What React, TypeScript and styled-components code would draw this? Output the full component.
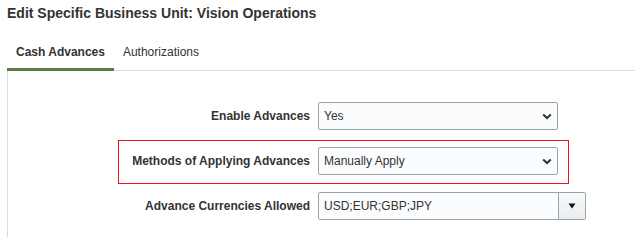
import React from "react";
import styled, { createGlobalStyle } from "styled-components";

const Global = createGlobalStyle`
  html, body { margin: 0; padding: 0; background: #ffffff; }
  body { font-family: "Liberation Sans", Arial, sans-serif; color: #333333; }
`;

const Page = styled.div`
  width: 635px;
  height: 237px;
  overflow: hidden;
  background: #ffffff;
`;

const Title = styled.h1`
  margin: 0;
  padding: 5px 0 0 7px;
  font-size: 14px;
  line-height: 17px;
  font-weight: 700;
  color: #333333;
`;

const TabBar = styled.div`
  display: flex;
  margin: 22px 0 0 7px;
  border-bottom: 1px solid #d6dde3;
`;

const Tab = styled.div<{ $active?: boolean }>`
  padding: 0 9px;
  height: 24px;
  line-height: 16px;
  font-size: 12px;
  font-weight: ${(p) => (p.$active ? 700 : 400)};
  color: #333333;
  border-bottom: 3px solid ${(p) => (p.$active ? "#5a7a47" : "transparent")};
  margin-bottom: -1px;
`;

const Content = styled.div`
  margin-left: 7px;
  border-left: 1px solid #d6dde3;
  height: 200px;
  padding-top: 31px;
  display: flex;
  flex-direction: column;
  gap: 17px;
`;

const Row = styled.div<{ $highlight?: boolean }>`
  position: relative;
  display: grid;
  grid-template-columns: 302px auto;
  column-gap: 8px;
  align-items: center;
  height: 28px;
  &::before {
    content: "";
    display: ${(p) => (p.$highlight ? "block" : "none")};
    position: absolute;
    left: 110px;
    top: -7px;
    width: 451px;
    height: 44px;
    border: 1px solid #e8141c;
    box-sizing: border-box;
    pointer-events: none;
  }
`;

const Label = styled.label`
  text-align: right;
  font-size: 12px;
  font-weight: 700;
  color: #333333;
`;

const Field = styled.div<{ $width: number }>`
  box-sizing: border-box;
  width: ${(p) => p.$width}px;
  height: 28px;
  border: 1px solid #9aa4ad;
  border-radius: 2px;
  background: #fbfcfd;
  display: flex;
  align-items: center;
  overflow: hidden;
`;

const Value = styled.span`
  flex: 1;
  padding-left: 5px;
  font-size: 12px;
  color: #333333;
  white-space: nowrap;
`;

const Chevron = styled.svg`
  width: 10px;
  height: 7px;
  margin-right: 5px;
  flex: none;
`;

const DropButton = styled.div`
  flex: none;
  width: 26px;
  height: 100%;
  border-left: 1px solid #9aa4ad;
  background: linear-gradient(#f8f9fa, #eaedef);
  display: flex;
  align-items: center;
  justify-content: center;
`;

const ChevronIcon = () => (
  <Chevron viewBox="0 0 10 7">
    <path d="M1.2 1.4 L5 5 L8.8 1.4" fill="none" stroke="#333" strokeWidth="2" />
  </Chevron>
);

const Triangle = () => (
  <svg width="8" height="6" viewBox="0 0 8 6">
    <path d="M0.5 0.5 H7.5 L4 5.5 Z" fill="#111" />
  </svg>
);

export default function App() {
  return (
    <Page>
      <Global />
      <Title>Edit Specific Business Unit: Vision Operations</Title>
      <TabBar>
        <Tab $active>Cash Advances</Tab>
        <Tab>Authorizations</Tab>
      </TabBar>
      <Content>
        <Row>
          <Label>Enable Advances</Label>
          <Field $width={240}>
            <Value>Yes</Value>
            <ChevronIcon />
          </Field>
        </Row>
        <Row $highlight>
          <Label>Methods of Applying Advances</Label>
          <Field $width={240}>
            <Value>Manually Apply</Value>
            <ChevronIcon />
          </Field>
        </Row>
        <Row>
          <Label>Advance Currencies Allowed</Label>
          <Field $width={268}>
            <Value>USD;EUR;GBP;JPY</Value>
            <DropButton>
              <Triangle />
            </DropButton>
          </Field>
        </Row>
      </Content>
    </Page>
  );
}
